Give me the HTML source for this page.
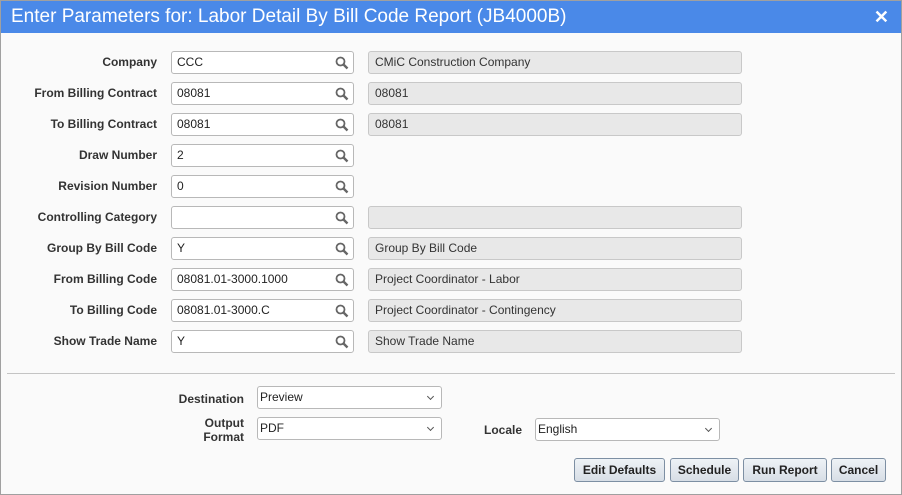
<!DOCTYPE html>
<html><head><style>
*{box-sizing:border-box;margin:0;padding:0}
body{width:902px;height:495px;font-family:"Liberation Sans",Arial,sans-serif;background:#fff;position:relative;overflow:hidden}
.win{position:absolute;left:0;top:0;width:902px;height:495px;border:1px solid #a0a0a0;background:#fafafa}
.title{position:absolute;left:0;top:0;width:900px;height:32px;background:#4a89e8;color:#fff;font-size:19px;line-height:32px;padding-left:10px}
.x{position:absolute;right:12px;top:0;font-size:18px;font-weight:bold}
.lbl{position:absolute;right:745px;font-size:12px;font-weight:bold;color:#333;text-align:right;line-height:22px}
.inp{position:absolute;left:171px;width:183px;height:23px;background:#fff;border:1px solid #b8b8b8;border-radius:3px;font-size:12px;line-height:21px;padding-left:5px;color:#222}
.inp svg{position:absolute;right:4px;top:4px}
.ro{position:absolute;left:368px;width:374px;height:23px;background:#e8e8e8;border:1px solid #c8c8c8;border-radius:3px;font-size:12px;line-height:21px;padding-left:6px;color:#333}
.sep{position:absolute;left:7px;top:373px;width:888px;height:1px;background:#c4c4c4}
.l2{position:absolute;font-size:12px;font-weight:bold;color:#333;text-align:right;line-height:14px}
.sel{position:absolute;height:23px;background:#fff;border:1px solid #b8b8b8;border-radius:3px;font-size:12px;line-height:21px;padding-left:2px;color:#222}
.sel:after{content:"";position:absolute;right:8px;top:7px;width:4px;height:4px;border-right:1px solid #555;border-bottom:1px solid #555;transform:rotate(45deg)}
.btn{position:absolute;top:458px;height:24px;background:linear-gradient(#eef2f6,#d7dee6);border:1px solid #7d8fa3;border-radius:3px;font-size:12px;font-weight:bold;color:#222;text-align:center;line-height:22px}
</style></head><body>
<div class="win">
<div class="title">Enter Parameters for: Labor Detail By Bill Code Report (JB4000B)<span class="x">✕</span></div>
</div>
<div id="rows"></div>
<script></script>
<!-- rows -->
<div class="lbl" style="top:51px">Company</div><div class="inp" style="top:51px">CCC<svg width="14" height="14" viewBox="0 0 14 14"><circle cx="5.5" cy="5.5" r="4" fill="none" stroke="#666" stroke-width="1.8"/><path d="M8.5 8.5L12.5 12.5" stroke="#666" stroke-width="2.4"/></svg></div><div class="ro" style="top:51px">CMiC Construction Company</div>
<div class="lbl" style="top:82px">From Billing Contract</div><div class="inp" style="top:82px">08081<svg width="14" height="14" viewBox="0 0 14 14"><circle cx="5.5" cy="5.5" r="4" fill="none" stroke="#666" stroke-width="1.8"/><path d="M8.5 8.5L12.5 12.5" stroke="#666" stroke-width="2.4"/></svg></div><div class="ro" style="top:82px">08081</div>
<div class="lbl" style="top:113px">To Billing Contract</div><div class="inp" style="top:113px">08081<svg width="14" height="14" viewBox="0 0 14 14"><circle cx="5.5" cy="5.5" r="4" fill="none" stroke="#666" stroke-width="1.8"/><path d="M8.5 8.5L12.5 12.5" stroke="#666" stroke-width="2.4"/></svg></div><div class="ro" style="top:113px">08081</div>
<div class="lbl" style="top:144px">Draw Number</div><div class="inp" style="top:144px">2<svg width="14" height="14" viewBox="0 0 14 14"><circle cx="5.5" cy="5.5" r="4" fill="none" stroke="#666" stroke-width="1.8"/><path d="M8.5 8.5L12.5 12.5" stroke="#666" stroke-width="2.4"/></svg></div>
<div class="lbl" style="top:175px">Revision Number</div><div class="inp" style="top:175px">0<svg width="14" height="14" viewBox="0 0 14 14"><circle cx="5.5" cy="5.5" r="4" fill="none" stroke="#666" stroke-width="1.8"/><path d="M8.5 8.5L12.5 12.5" stroke="#666" stroke-width="2.4"/></svg></div>
<div class="lbl" style="top:206px">Controlling Category</div><div class="inp" style="top:206px"><svg width="14" height="14" viewBox="0 0 14 14"><circle cx="5.5" cy="5.5" r="4" fill="none" stroke="#666" stroke-width="1.8"/><path d="M8.5 8.5L12.5 12.5" stroke="#666" stroke-width="2.4"/></svg></div><div class="ro" style="top:206px"></div>
<div class="lbl" style="top:237px">Group By Bill Code</div><div class="inp" style="top:237px">Y<svg width="14" height="14" viewBox="0 0 14 14"><circle cx="5.5" cy="5.5" r="4" fill="none" stroke="#666" stroke-width="1.8"/><path d="M8.5 8.5L12.5 12.5" stroke="#666" stroke-width="2.4"/></svg></div><div class="ro" style="top:237px">Group By Bill Code</div>
<div class="lbl" style="top:268px">From Billing Code</div><div class="inp" style="top:268px">08081.01-3000.1000<svg width="14" height="14" viewBox="0 0 14 14"><circle cx="5.5" cy="5.5" r="4" fill="none" stroke="#666" stroke-width="1.8"/><path d="M8.5 8.5L12.5 12.5" stroke="#666" stroke-width="2.4"/></svg></div><div class="ro" style="top:268px">Project Coordinator - Labor</div>
<div class="lbl" style="top:299px">To Billing Code</div><div class="inp" style="top:299px">08081.01-3000.C<svg width="14" height="14" viewBox="0 0 14 14"><circle cx="5.5" cy="5.5" r="4" fill="none" stroke="#666" stroke-width="1.8"/><path d="M8.5 8.5L12.5 12.5" stroke="#666" stroke-width="2.4"/></svg></div><div class="ro" style="top:299px">Project Coordinator - Contingency</div>
<div class="lbl" style="top:330px">Show Trade Name</div><div class="inp" style="top:330px">Y<svg width="14" height="14" viewBox="0 0 14 14"><circle cx="5.5" cy="5.5" r="4" fill="none" stroke="#666" stroke-width="1.8"/><path d="M8.5 8.5L12.5 12.5" stroke="#666" stroke-width="2.4"/></svg></div><div class="ro" style="top:330px">Show Trade Name</div>
<div class="sep"></div>
<div class="l2" style="left:150px;width:94px;top:392px">Destination</div>
<div class="sel" style="left:257px;top:386px;width:185px">Preview</div>
<div class="l2" style="left:150px;width:94px;top:416px">Output<br>Format</div>
<div class="sel" style="left:257px;top:417px;width:185px">PDF</div>
<div class="l2" style="left:440px;width:82px;top:423px">Locale</div>
<div class="sel" style="left:535px;top:418px;width:185px">English</div>
<div class="btn" style="left:574px;width:91px">Edit Defaults</div>
<div class="btn" style="left:670px;width:69px">Schedule</div>
<div class="btn" style="left:743px;width:84px">Run Report</div>
<div class="btn" style="left:831px;width:55px">Cancel</div>
</body></html>
